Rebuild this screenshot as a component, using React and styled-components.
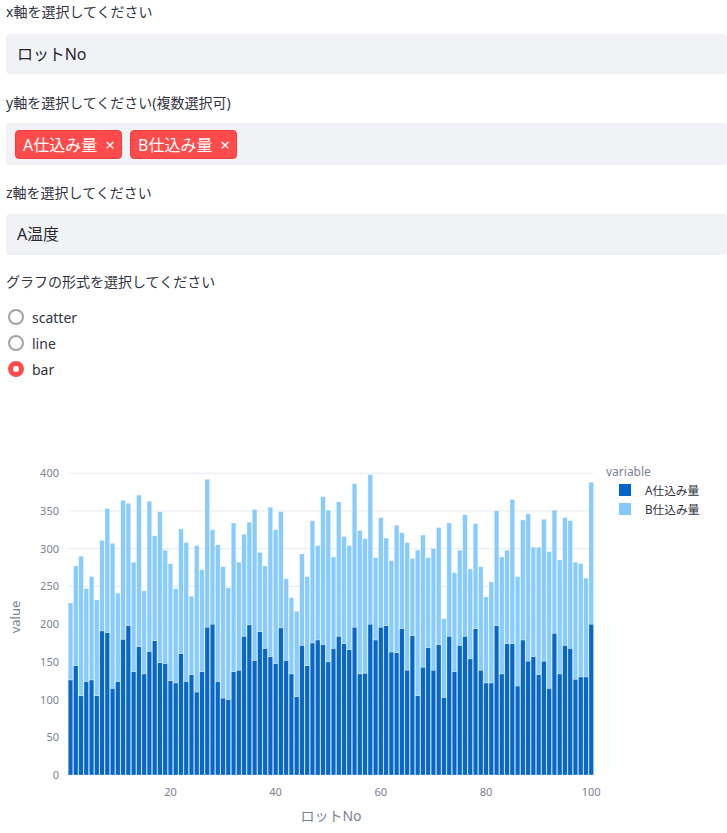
import React from "react";
import styled, { createGlobalStyle } from "styled-components";

const Global = createGlobalStyle`
  html, body { margin: 0; padding: 0; background: #fff; }
  body { overflow: hidden; font-family: "Noto Sans", "Noto Sans CJK JP", sans-serif; color: #31333f; }
`;

const Page = styled.div`
  width: 727px;
  height: 833px;
  overflow: hidden;
`;
const Form = styled.div`
  padding-left: 6px;
  display: flex;
  flex-direction: column;
`;
const Label = styled.div`
  font-size: 14px;
  line-height: 24px;
  height: 24px;
  margin-top: ${(p) => p.$top}px;
  margin-bottom: ${(p) => p.$bottom}px;
  color: #31333f;
  white-space: nowrap;
`;
const Select = styled.div`
  background: #f0f2f6;
  border-radius: 4px;
  height: ${(p) => p.$height}px;
  box-sizing: border-box;
  display: flex;
  align-items: center;
  padding-left: 11px;
  padding-bottom: ${(p) => p.$lift}px;
  font-size: 16px;
  letter-spacing: -0.1px;
  color: #262730;
`;
const MultiSelect = styled.div`
  background: #f0f2f6;
  border-radius: 4px;
  height: 42px;
  box-sizing: border-box;
  display: flex;
  align-items: flex-start;
  gap: 8px;
  padding: 7px 0 0 9px;
`;
const Tag = styled.div`
  width: 107px;
  height: 29px;
  box-sizing: border-box;
  border: 1px solid #f04040;
  border-radius: 4px;
  background: #ff4b4b;
  color: #fff;
  display: flex;
  align-items: center;
  padding: 0 0 2px 7px;
  font-size: 16px;
  white-space: nowrap;
`;
const Close = styled.span`
  margin-left: auto;
  margin-right: 6px;
  font-size: 17px;
  font-weight: 400;
  line-height: 1;
  position: relative;
  top: 1px;
`;
const Radios = styled.div`
  display: flex;
  flex-direction: column;
  gap: 6px;
  margin-top: 13px;
`;
const RadioRow = styled.div`
  display: flex;
  align-items: center;
  height: 20px;
  gap: 8px;
  padding-left: 2px;
  font-size: 14px;
  color: #31333f;
`;
const Dot = styled.span`
  width: 16px;
  height: 16px;
  box-sizing: border-box;
  border-radius: 50%;
  flex: none;
  border: ${(p) => (p.$on ? "5px solid #ff4b4b" : "2px solid #a3a3a8")};
  background: #fff;
`;
const Chart = styled.svg`
  display: block;
  margin-top: 61px;
`;
const ChartText = styled.text`
  font-family: "Noto Sans", "Noto Sans CJK JP", sans-serif;
  font-size: ${(p) => p.$size || 11}px;
  fill: ${(p) => p.$fill || "#7c8196"};
`;

const A = [126,145,105,124,126,105,191,189,115,124,180,198,137,170,134,164,178,149,148,125,122,161,124,133,110,137,196,200,124,102,100,137,139,184,199,152,190,168,157,148,195,152,134,104,172,145,175,179,173,150,168,184,174,166,196,134,135,200,179,196,198,163,162,194,139,185,105,143,169,139,173,103,184,137,172,184,154,194,139,122,122,198,134,174,174,118,179,151,157,133,151,115,188,134,172,168,127,130,130,200];
const T = [228,277,290,247,263,232,311,353,307,241,364,360,282,371,244,363,317,349,298,280,247,326,308,237,304,272,392,325,305,276,248,334,282,319,335,352,295,277,355,325,349,260,235,217,293,263,337,304,369,351,289,362,316,304,386,324,313,398,288,341,314,284,331,321,308,287,298,318,288,300,328,207,334,268,298,345,273,333,276,236,256,350,289,298,365,263,338,346,302,302,339,296,351,285,341,337,282,280,261,388];

const TOP = 440;
const Y0 = 775 - TOP;
const K = 0.7545;
const X = (n) => 70.5 + 5.26 * (n - 1);
const yOf = (v) => Y0 - v * K;

const Bars = () => (
  <g stroke="#fff" strokeWidth="0.5" strokeOpacity="0.55">
    {A.map((a, i) => (
      <React.Fragment key={i}>
        <rect x={X(i + 1) - 2.3} y={yOf(a)} width="4.6" height={a * K} fill="#0063c7" fillOpacity="0.97" />
        <rect x={X(i + 1) - 2.3} y={yOf(T[i])} width="4.6" height={(T[i] - a) * K} fill="#83c9ff" fillOpacity="0.97" />
      </React.Fragment>
    ))}
  </g>
);

const App = () => (
  <Page>
    <Global />
    <Form>
      <Label $top={0} $bottom={10}>x軸を選択してください</Label>
      <Select $height={40} $lift={2}>ロットNo</Select>
      <Label $top={17} $bottom={8}>y軸を選択してください(複数選択可)</Label>
      <MultiSelect>
        <Tag>A仕込み量<Close>×</Close></Tag>
        <Tag>B仕込み量<Close>×</Close></Tag>
      </MultiSelect>
      <Label $top={16} $bottom={9}>z軸を選択してください</Label>
      <Select $height={41} $lift={4}>A温度</Select>
      <Label $top={15} $bottom={0}>グラフの形式を選択してください</Label>
      <Radios>
        <RadioRow><Dot />scatter</RadioRow>
        <RadioRow><Dot />line</RadioRow>
        <RadioRow><Dot $on />bar</RadioRow>
      </Radios>
    </Form>
    <Chart width="727" height="393" viewBox="0 0 727 393">
      {[50, 100, 150, 200, 250, 300, 350, 400].map((v) => (
        <line key={v} x1="68" x2="593" y1={yOf(v)} y2={yOf(v)} stroke="#e6eaf1" strokeWidth="1" />
      ))}
      <Bars />
      {[0, 50, 100, 150, 200, 250, 300, 350, 400].map((v) => (
        <ChartText key={v} x="59" y={yOf(v) + 4} textAnchor="end">{v}</ChartText>
      ))}
      {[20, 40, 60, 80, 100].map((n) => (
        <ChartText key={n} x={X(n)} y="356" textAnchor="middle">{n}</ChartText>
      ))}
      <ChartText x="331" y="381" textAnchor="middle" $size={14}>ロットNo</ChartText>
      <ChartText transform="translate(20 177) rotate(-90)" textAnchor="middle" $size={13}>value</ChartText>
      <ChartText x="606" y="36" $size={12}>variable</ChartText>
      <rect x="619" y="44" width="12" height="12" fill="#0063c7" />
      <ChartText x="645" y="55" $size={11.7} $fill="#31333f">A仕込み量</ChartText>
      <rect x="619" y="63" width="12" height="12" fill="#83c9ff" />
      <ChartText x="645" y="74" $size={11.7} $fill="#31333f">B仕込み量</ChartText>
    </Chart>
  </Page>
);

export default App;
